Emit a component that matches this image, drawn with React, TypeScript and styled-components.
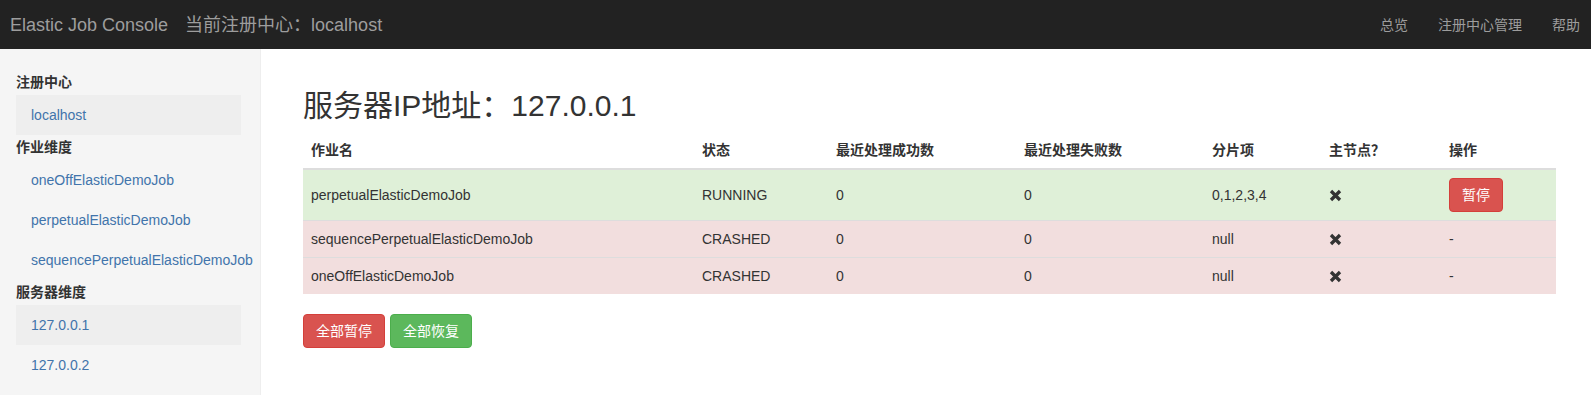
import React from "react";
import styled, { createGlobalStyle } from "styled-components";

const Global = createGlobalStyle`
  * { box-sizing: border-box; }
  html, body { margin: 0; padding: 0; background: #fff; }
  body {
    font-family: "Liberation Sans", "Noto Sans CJK SC", sans-serif;
    font-size: 14px;
    line-height: 20px;
    color: #333;
  }
`;

const Navbar = styled.header`
  display: flex;
  align-items: center;
  height: 49px;
  background: #222;
  padding: 0 11px 0 10px;
  color: #9d9d9d;
  overflow: hidden;
`;

const Brand = styled.span`
  font-size: 18px;
  line-height: 20px;
  color: #9d9d9d;
`;

const NavText = styled.span`
  font-size: 18px;
  line-height: 20px;
  margin-left: 17px;
  color: #9d9d9d;
`;

const NavList = styled.nav`
  display: flex;
  margin-left: auto;
  margin-right: -15px;
`;

const NavLink = styled.a`
  padding: 0 15px;
  font-size: 14px;
  line-height: 20px;
  color: #9d9d9d;
  text-decoration: none;
`;

const Body = styled.div`
  display: flex;
  min-height: calc(100vh - 49px);
`;

const Sidebar = styled.aside`
  flex: 0 0 261px;
  width: 261px;
  background: #f5f5f5;
  border-right: 1px solid #eee;
  padding: 21px 19px 20px 16px;
`;

const SectionTitle = styled.div`
  font-weight: bold;
  line-height: 20px;
  margin: 2px 0 3px;
  color: #333;
`;

const Pill = styled.a<{ $active?: boolean }>`
  display: block;
  padding: 10px 15px;
  line-height: 20px;
  white-space: nowrap;
  color: #4174ab;
  text-decoration: none;
  background: ${(p) => (p.$active ? "#eee" : "transparent")};
`;

const Main = styled.main`
  flex: 1;
  min-width: 0;
  padding: 20px 35px 0 42px;
`;

const Title = styled.h1`
  font-size: 30px;
  line-height: 1.1;
  font-weight: 400;
  margin: 20px 0 10px;
  color: #333;
`;

const Table = styled.table`
  width: 100%;
  border-collapse: collapse;
  table-layout: fixed;
  margin-bottom: 20px;
`;

const Col = styled.col<{ $w: number }>`
  width: ${(p) => p.$w}px;
`;

const Th = styled.th`
  text-align: left;
  font-weight: bold;
  padding: 8px;
  line-height: 20px;
  border-bottom: 2px solid #ddd;
  vertical-align: bottom;
`;

const Tr = styled.tr<{ $tone: "success" | "danger" }>`
  background: ${(p) => (p.$tone === "success" ? "#dff0d8" : "#f2dede")};
`;

const Td = styled.td`
  padding: 8px;
  line-height: 20px;
  border-top: 1px solid #ddd;
  vertical-align: middle;
  white-space: nowrap;
`;

const Btn = styled.button<{ $variant: "danger" | "success" }>`
  display: inline-block;
  padding: 6px 12px;
  font-family: inherit;
  font-size: 14px;
  line-height: 20px;
  border-radius: 4px;
  border: 1px solid ${(p) => (p.$variant === "danger" ? "#d43f3a" : "#4cae4c")};
  background: ${(p) => (p.$variant === "danger" ? "#d9534f" : "#5cb85c")};
  color: #fff;
  cursor: pointer;
`;

const Actions = styled.div`
  display: flex;
  gap: 5px;
`;

const RemoveIcon = () => (
  <svg width="13" height="13" viewBox="0 0 13 13" style={{ display: "block" }}>
    <path d="M2 2 L11 11 M11 2 L2 11" stroke="#333" strokeWidth="3.3" />
  </svg>
);

type Job = {
  name: string;
  status: string;
  ok: number;
  fail: number;
  shards: string;
  tone: "success" | "danger";
  action: boolean;
};

const jobs: Job[] = [
  { name: "perpetualElasticDemoJob", status: "RUNNING", ok: 0, fail: 0, shards: "0,1,2,3,4", tone: "success", action: true },
  { name: "sequencePerpetualElasticDemoJob", status: "CRASHED", ok: 0, fail: 0, shards: "null", tone: "danger", action: false },
  { name: "oneOffElasticDemoJob", status: "CRASHED", ok: 0, fail: 0, shards: "null", tone: "danger", action: false },
];

const widths = [391, 134, 188, 188, 117, 120, 115];
const headers = ["作业名", "状态", "最近处理成功数", "最近处理失败数", "分片项", "主节点？", "操作"];

export default function App() {
  return (
    <>
      <Global />
      <Navbar>
        <Brand>Elastic Job Console</Brand>
        <NavText>当前注册中心：localhost</NavText>
        <NavList>
          <NavLink>总览</NavLink>
          <NavLink>注册中心管理</NavLink>
          <NavLink>帮助</NavLink>
        </NavList>
      </Navbar>
      <Body>
        <Sidebar>
          <SectionTitle>注册中心</SectionTitle>
          <Pill $active>localhost</Pill>
          <SectionTitle>作业维度</SectionTitle>
          <Pill>oneOffElasticDemoJob</Pill>
          <Pill>perpetualElasticDemoJob</Pill>
          <Pill>sequencePerpetualElasticDemoJob</Pill>
          <SectionTitle>服务器维度</SectionTitle>
          <Pill $active>127.0.0.1</Pill>
          <Pill>127.0.0.2</Pill>
        </Sidebar>
        <Main>
          <Title>服务器IP地址：127.0.0.1</Title>
          <Table>
            <colgroup>
              {widths.map((w, i) => (
                <Col key={i} $w={w} />
              ))}
            </colgroup>
            <thead>
              <tr>
                {headers.map((h) => (
                  <Th key={h}>{h}</Th>
                ))}
              </tr>
            </thead>
            <tbody>
              {jobs.map((j) => (
                <Tr key={j.name} $tone={j.tone}>
                  <Td>{j.name}</Td>
                  <Td>{j.status}</Td>
                  <Td>{j.ok}</Td>
                  <Td>{j.fail}</Td>
                  <Td>{j.shards}</Td>
                  <Td>
                    <RemoveIcon />
                  </Td>
                  <Td>{j.action ? <Btn $variant="danger">暂停</Btn> : "-"}</Td>
                </Tr>
              ))}
            </tbody>
          </Table>
          <Actions>
            <Btn $variant="danger">全部暂停</Btn>
            <Btn $variant="success">全部恢复</Btn>
          </Actions>
        </Main>
      </Body>
    </>
  );
}
